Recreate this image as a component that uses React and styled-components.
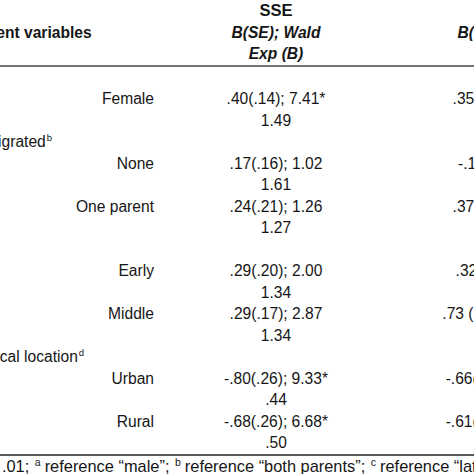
import styled, { createGlobalStyle } from 'styled-components'

const Global = createGlobalStyle`
  html, body {
    margin: 0;
    padding: 0;
    background: #fff;
    overflow: hidden;
  }
  body {
    font-family: "Liberation Sans", Arial, sans-serif;
    color: #161616;
  }
`

const Sheet = styled.div`
  margin-left: -73px;
  width: 700px;
  font-size: 15.6px;
  line-height: 21.5px;
  white-space: nowrap;
`

const Row = styled.div`
  display: grid;
  grid-template-columns: 227px 244px 208px;
`

const Head = styled(Row)`
  border-bottom: 2px solid #747474;
  font-weight: bold;
`

const HeadLabel = styled.div`
  align-self: center;
`

const HeadCell = styled.div`
  display: flex;
  flex-direction: column;
  align-items: center;
`

const Title = styled.div`
  font-size: 16.6px;
`

const Stat = styled.div`
  font-style: italic;
`

const Group = styled.div`
  grid-column: 1 / -1;
`

const Sub = styled.div`
  text-align: right;
`

const Value = styled.div`
  display: flex;
  flex-direction: column;
  align-items: center;
`

const Sup = styled.sup`
  font-size: ${p => p.$size || 9.5}px;
  line-height: 0;
  vertical-align: 0;
  position: relative;
  top: -6px;
  margin: 0 ${p => p.$gap || 0}px 0 1px;
`

const Note = styled.div`
  border-top: 2px solid #5a5a5a;
  margin-left: -3px;
  padding-left: 0;
  font-size: 16.4px;
`

const groups = [
  {
    label: 'Gender', sup: 'a',
    rows: [
      { name: 'Female', sse: ['.40(.14); 7.41*', '1.49'], ase: ['.35(.15); 5.32*', '1.42'] },
    ],
  },
  {
    label: 'Parents migrated', sup: 'b',
    rows: [
      { name: 'None', sse: ['.17(.16); 1.02', '1.61'], ase: ['-.11(.17); .42', '.90'] },
      { name: 'One parent', sse: ['.24(.21); 1.26', '1.27'], ase: ['.37(.22); 2.83*', '1.45'] },
    ],
  },
  {
    label: 'Stage', sup: 'c',
    rows: [
      { name: 'Early', sse: ['.29(.20); 2.00', '1.34'], ase: ['.32(.21); 2.32', '1.38'] },
      { name: 'Middle', sse: ['.29(.17); 2.87', '1.34'], ase: ['.73 (.18); 116.45*', '2.08'] },
    ],
  },
  {
    label: 'Geographical location', sup: 'd',
    rows: [
      { name: 'Urban', sse: ['-.80(.26); 9.33*', '.44'], ase: ['-.66(.27); 16.01*', '.52'] },
      { name: 'Rural', sse: ['-.68(.26); 6.68*', '.50'], ase: ['-.61(.26); 15.50*', '.54'] },
    ],
  },
]

function Lines({ items }) {
  return <Value>{items.map((t, i) => <span key={i}>{t}</span>)}</Value>
}

export default function App() {
  return <>
    <Global />
    <Sheet>
      <Head>
        <HeadLabel>Independent variables</HeadLabel>
        <HeadCell>
          <Title>SSE</Title>
          <Stat>B(SE); Wald</Stat>
          <Stat>Exp (B)</Stat>
        </HeadCell>
        <HeadCell>
          <Title>ASE</Title>
          <Stat>B(SE); Wald</Stat>
          <Stat>Exp (B)</Stat>
        </HeadCell>
      </Head>

      {groups.map(g => <div key={g.label}>
        <Row>
          <Group>{g.label}<Sup>{g.sup}</Sup></Group>
        </Row>
        {g.rows.map(r => <Row key={r.name}>
          <Sub>{r.name}</Sub>
          <Lines items={r.sse} />
          <Lines items={r.ase} />
        </Row>)}
      </div>)}

      <Note>
        Note. *p &lt; .01; <Sup $size={10.5} $gap={4}>a</Sup>reference “male”; <Sup $size={10.5} $gap={4}>b</Sup>reference “both parents”; <Sup $size={10.5} $gap={4}>c</Sup>reference “late”; <Sup $size={10.5} $gap={4}>d</Sup>reference “suburban”
      </Note>
    </Sheet>
  </>
}
